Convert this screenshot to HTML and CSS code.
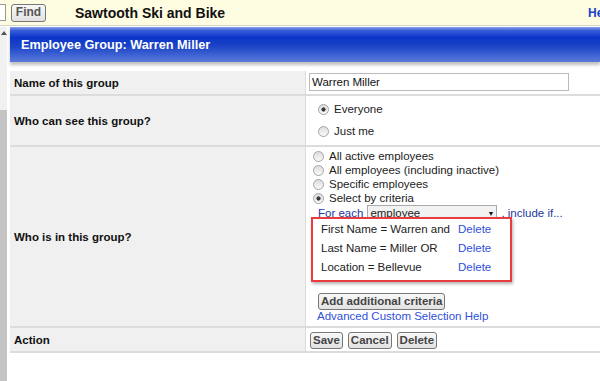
FILE: index.html
```html
<!DOCTYPE html>
<html lang="en">
<head>
    <meta charset="UTF-8">
    <title>Employee Group</title>
    <link rel="stylesheet" href="styles.css">
</head>
<body>

    <div class="topbar">
        <input type="text" class="find-input">
        <button class="btn find-btn">Find</button>
        <div class="company">Sawtooth Ski and Bike</div>
        <a class="help" href="#">Help</a>
    </div>

    <div class="layout">
        <div class="scrollbar">
            <div class="track"><span class="arrow"></span></div>
            <div class="thumb"></div>
        </div>

        <div class="main">
            <div class="page-header">Employee Group: Warren Miller</div>

            <table class="form-table">
                <tr class="row-name">
                    <th>Name of this group</th>
                    <td><input type="text" class="name-input" value="Warren Miller"></td>
                </tr>
                <tr class="row-see">
                    <th>Who can see this group?</th>
                    <td>
                        <div class="see-options">
                            <label class="opt"><input type="radio" name="see" checked> Everyone</label>
                            <label class="opt"><input type="radio" name="see"> Just me</label>
                        </div>
                    </td>
                </tr>
                <tr class="row-who">
                    <th>Who is in this group?</th>
                    <td>
                        <div class="who-options">
                            <label class="opt"><input type="radio" name="who"> All active employees</label>
                            <label class="opt"><input type="radio" name="who"> All employees (including inactive)</label>
                            <label class="opt"><input type="radio" name="who"> Specific employees</label>
                            <label class="opt"><input type="radio" name="who" checked> Select by criteria</label>
                        </div>
                        <div class="for-each">
                            For each
                            <span class="fake-select">employee<span class="caret">&#9660;</span></span>
                            , include if...
                        </div>
                        <!-- rows of criteria, highlighted -->
                        <div class="criteria">
                            <div class="crit"><span class="crit-text">First Name = Warren and</span><a href="#">Delete</a></div>
                            <div class="crit"><span class="crit-text">Last Name = Miller OR</span><a href="#">Delete</a></div>
                            <div class="crit"><span class="crit-text">Location = Bellevue</span><a href="#">Delete</a></div>
                        </div>
                        <button class="btn add-btn">Add additional criteria</button>
                        <a class="adv-link" href="#">Advanced Custom Selection Help</a>
                    </td>
                </tr>
                <tr class="row-action">
                    <th>Action</th>
                    <td>
                        <div class="actions">
                            <button class="btn">Save</button>
                            <button class="btn">Cancel</button>
                            <button class="btn">Delete</button>
                        </div>
                    </td>
                </tr>
            </table>
        </div>
    </div>

</body>
</html>
```

FILE: styles.css
```css
body {
    margin: 0;
    font-family: 'Liberation Sans', Arial, sans-serif;
    font-size: 11.5px;
    color: #222;
    background: #fff;
    overflow: hidden;
}

a {
    color: #2f50d8;
    text-decoration: none;
}

.btn {
    font-family: 'Liberation Sans', Arial, sans-serif;
    font-size: 11.5px;
    font-weight: bold;
    color: #444;
    background: linear-gradient(#f8f8f8, #e2e2e2);
    border: 1px solid #777;
    border-radius: 3px;
    padding: 0 2px;
    height: 16px;
    line-height: 13px;
    cursor: pointer;
}

/* top bar */
.topbar {
    display: flex;
    align-items: center;
    height: 25px;
    background-color: #fffde1;
    border-bottom: 1px solid #d4d4c4;
}

.find-input {
    margin-left: -120px;
    width: 124px;
    height: 15px;
    border: 1px solid #999;
    padding: 0;
}

.find-btn {
    margin-left: 5px;
    width: 35px;
    height: 18px;
    font-size: 12px;
    color: #555;
}

.company {
    flex: 1;
    margin-left: 29px;
    font-size: 14px;
    font-weight: bold;
    color: #111;
}

.help {
    margin-right: -14px;
    font-size: 12px;
    font-weight: bold;
    color: #1a3fd0;
}

/* left scrollbar + main column */
.layout {
    display: flex;
    margin-top: 1px;
    height: 355px;
}

.scrollbar {
    width: 7px;
    flex-shrink: 0;
    display: flex;
    flex-direction: column;
}

.scrollbar .track {
    height: 83px;
    background: #f1f1f1;
    position: relative;
}

.scrollbar .arrow {
    position: absolute;
    top: 4px;
    left: 1px;
    border-left: 3px solid transparent;
    border-right: 3px solid transparent;
    border-bottom: 4px solid #555;
}

.scrollbar .thumb {
    flex: 1;
    background: #c4c4c4;
}

.main {
    flex: 1;
    min-width: 0;
    margin-left: 3px;
}

.page-header {
    height: 35px;
    line-height: 37px;
    padding-left: 11px;
    font-size: 12.7px;
    font-weight: bold;
    color: #fff;
    background: linear-gradient(#8aa2ea 0%, #3a5ed8 10%, #0a35c8 30%, #1c44c6 55%, #3e62d2 80%, #5a7ad8 100%);
    box-shadow: 0 3px 3px rgba(0, 0, 0, 0.25);
}

/* form table */
.form-table {
    margin-top: 9px;
    width: 600px;
    border-collapse: collapse;
    border-bottom: 2px solid #dcdcdc;
}

.form-table th {
    width: 287px;
    padding: 0 4px;
    text-align: left;
    font-weight: bold;
    font-size: 11.5px;
    color: #111;
    background: #f0f0f0;
    border-right: 1px solid #dcdcdc;
}

.form-table tr + tr th,
.form-table tr + tr td {
    border-top: 2px solid #dcdcdc;
}

.form-table td {
    padding: 0 3px;
    vertical-align: top;
}

.row-name th,
.row-name td {
    height: 23px;
}

.name-input {
    margin-top: 2px;
    width: 254px;
    height: 16px;
    padding: 0 2px;
    border: 1px solid #bbb;
    font-family: 'Liberation Sans', Arial, sans-serif;
    font-size: 11.5px;
    color: #111;
}

.row-see th,
.row-see td {
    height: 49px;
}

.opt {
    display: flex;
    align-items: center;
    color: #222;
}

.opt input {
    appearance: none;
    width: 11px;
    height: 11px;
    margin: 0 5px 0 0;
    border: 1px solid #a4a4a4;
    border-radius: 50%;
    background: linear-gradient(#dcdcdc, #fafafa);
}

.opt input:checked {
    background: radial-gradient(circle, #3a3a3a 0, #3a3a3a 1.8px, transparent 2.4px), linear-gradient(#dcdcdc, #fafafa);
}

.see-options {
    padding: 6px 0 0 9px;
    display: flex;
    flex-direction: column;
    gap: 8px;
}

.see-options .opt {
    height: 14px;
}

.row-who th,
.row-who td {
    height: 179px;
}

.who-options {
    padding-top: 2px;
    padding-left: 4px;
}

.who-options .opt {
    height: 14px;
}

.for-each {
    display: flex;
    align-items: center;
    height: 16px;
    padding-left: 9px;
    color: #23389a;
}

.fake-select {
    display: inline-flex;
    justify-content: space-between;
    align-items: center;
    width: 124px;
    height: 14px;
    margin: 0 4px 0 4px;
    padding: 0 2px;
    border: 1px solid #aaa;
    background: #f2f2f2;
    color: #222;
}

.fake-select .caret {
    font-size: 7px;
    color: #111;
}

.criteria {
    margin: -4px 0 0 2px;
    width: 189px;
    padding: 0 0 4px 8px;
    background: #fff;
    border: 2px solid #ea3b3f;
    box-shadow: 1px 2px 3px rgba(0, 0, 0, 0.3);
    position: relative;
}

.crit {
    display: flex;
    height: 19px;
    align-items: center;
    font-size: 11.5px;
}

.crit-text {
    width: 137px;
    color: #222;
}

.add-btn {
    display: block;
    margin: 11px 0 0 9px;
    height: 17px;
}

.adv-link {
    display: block;
    margin: 0 0 0 8px;
    font-size: 11.5px;
}

.row-action th,
.row-action td {
    height: 23px;
}

.actions {
    display: flex;
    gap: 5px;
    padding-top: 4px;
    padding-left: 1px;
}

.actions .btn {
    height: 17px;
}
```
